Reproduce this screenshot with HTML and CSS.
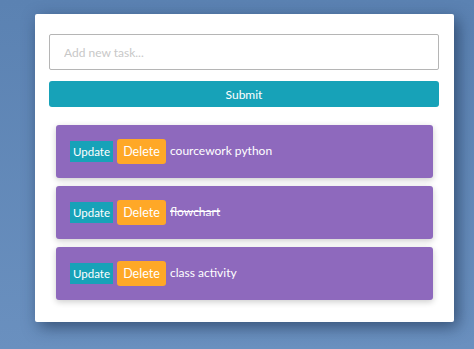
FILE: index.html
```html
<!DOCTYPE html>
<html lang="en">
  <head>
    <title>Todo</title>
    <link rel="stylesheet" href="styles.css">
  </head>
  <body>
    <div class="card">
      <form class="add-form">
        <input class="task-input" type="text" placeholder="Add new task...">
        <button class="submit-btn" type="button">Submit</button>
      </form>
      <ul class="task-list">
        <li class="task">
          <button class="btn update">Update</button>
          <button class="btn delete">Delete</button>
          <span class="task-name">courcework python</span>
        </li>
        <li class="task">
          <button class="btn update">Update</button>
          <button class="btn delete">Delete</button>
          <span class="task-name done">flowchart</span>
        </li>
        <li class="task">
          <button class="btn update">Update</button>
          <button class="btn delete">Delete</button>
          <span class="task-name">class activity</span>
        </li>
      </ul>
    </div>
  </body>
</html>
```

FILE: styles.css
```css
html, body {
  height: 100%;
}
body {
  margin: 0;
  font-family: Lato, "Open Sans", sans-serif;
  background: linear-gradient(180deg, #5b82b2 0%, #6a90bf 100%);
  overflow: hidden;
}
.card {
  margin: 14px 0 0 35px;
  width: 419px;
  box-sizing: border-box;
  padding: 20px 15px 22px 14px;
  background: #fff;
  border-radius: 2px;
  box-shadow: 4px 5px 16px rgba(20, 40, 70, 0.6);
}
.add-form {
  display: flex;
  flex-direction: column;
  gap: 11px;
}
.task-input {
  height: 36px;
  box-sizing: border-box;
  border: 1px solid #b5b5b5;
  border-radius: 2px;
  padding: 0 14px;
  font-family: inherit;
  font-size: 12px;
  color: #333;
}
.task-input::placeholder {
  color: #c8c8c8;
}
.submit-btn {
  height: 26px;
  border: none;
  border-radius: 3px;
  background: #17a2b8;
  color: #fff;
  font-family: inherit;
  font-size: 12px;
}
.task-list {
  list-style: none;
  margin: 18px 6px 0 7px;
  padding: 0;
  display: flex;
  flex-direction: column;
  gap: 8px;
}
.task {
  height: 53px;
  display: flex;
  align-items: center;
  gap: 4px;
  padding: 0 14px;
  background: #8e69bd;
  border-radius: 3px;
  box-shadow: 0 2px 6px rgba(0, 0, 0, 0.2);
}
.btn {
  border: none;
  color: #fff;
  font-family: inherit;
  font-size: 11.5px;
  padding: 0;
}
.update {
  width: 43px;
  height: 21px;
  background: #17a2b8;
}
.delete {
  width: 49px;
  height: 25px;
  background: #ffa827;
  border-radius: 3px;
  font-size: 12.5px;
}
.task-name {
  color: #fff;
  font-size: 12px;
  margin-top: -3px;
}
.done {
  text-decoration: line-through;
}
```
